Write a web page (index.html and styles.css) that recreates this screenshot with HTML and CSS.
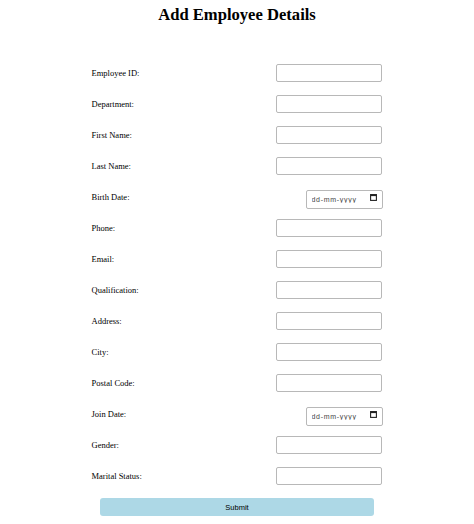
FILE: index.html
```html
<!DOCTYPE html>
<html lang="en-GB">
<head>
    <meta charset="UTF-8">
    <meta name="viewport" content="width=device-width, initial-scale=1.0">
    <title>Add Employee Details</title>
    <link rel="stylesheet" href="styles.css">
</head>
<body>
    <h1 class="page-title">Add Employee Details</h1>
    <form class="employee-form">
        <div class="form-row">
            <label for="employeeId">Employee ID:</label>
            <input type="text" id="employeeId">
        </div>
        <div class="form-row">
            <label for="department">Department:</label>
            <input type="text" id="department">
        </div>
        <div class="form-row">
            <label for="firstName">First Name:</label>
            <input type="text" id="firstName">
        </div>
        <div class="form-row">
            <label for="lastName">Last Name:</label>
            <input type="text" id="lastName">
        </div>
        <div class="form-row">
            <label for="birthDate">Birth Date:</label>
            <div class="date-field">
                <input type="text" id="birthDate" placeholder="dd-mm-yyyy">
                <svg class="calendar-icon" width="7" height="7" viewBox="0 0 7 7"><rect x="0.6" y="0.6" width="5.8" height="5.8" fill="none" stroke="#222" stroke-width="1.1"/><rect x="0.5" y="0.5" width="6" height="1.6" fill="#222"/></svg>
            </div>
        </div>
        <div class="form-row">
            <label for="phone">Phone:</label>
            <input type="text" id="phone">
        </div>
        <div class="form-row">
            <label for="email">Email:</label>
            <input type="text" id="email">
        </div>
        <div class="form-row">
            <label for="qualification">Qualification:</label>
            <input type="text" id="qualification">
        </div>
        <div class="form-row">
            <label for="address">Address:</label>
            <input type="text" id="address">
        </div>
        <div class="form-row">
            <label for="city">City:</label>
            <input type="text" id="city">
        </div>
        <div class="form-row">
            <label for="postalCode">Postal Code:</label>
            <input type="text" id="postalCode">
        </div>
        <div class="form-row">
            <label for="joinDate">Join Date:</label>
            <div class="date-field">
                <input type="text" id="joinDate" placeholder="dd-mm-yyyy">
                <svg class="calendar-icon" width="7" height="7" viewBox="0 0 7 7"><rect x="0.6" y="0.6" width="5.8" height="5.8" fill="none" stroke="#222" stroke-width="1.1"/><rect x="0.5" y="0.5" width="6" height="1.6" fill="#222"/></svg>
            </div>
        </div>
        <div class="form-row">
            <label for="gender">Gender:</label>
            <input type="text" id="gender">
        </div>
        <div class="form-row">
            <label for="maritalStatus">Marital Status:</label>
            <input type="text" id="maritalStatus">
        </div>
        <button type="button" class="submit-btn">Submit</button>
    </form>
</body>
</html>
```

FILE: styles.css
```css
body {
    margin: 0;
    font-family: 'Liberation Serif', serif;
    background-color: white;
    color: black;
}
.page-title {
    margin: 5px 0 0 0;
    text-align: center;
    font-size: 16.6px;
    line-height: 20px;
}
.employee-form {
    width: 291px;
    margin: 39px auto 0 auto;
    display: flex;
    flex-direction: column;
}
.form-row {
    display: flex;
    justify-content: space-between;
    align-items: center;
    height: 18px;
    margin-bottom: 13px;
}
.form-row label {
    font-size: 8.5px;
    margin-top: -1px;
}
.form-row input {
    box-sizing: border-box;
    width: 106px;
    height: 18px;
    margin: 0 1px 0 0;
    padding: 0 3px;
    border: 1px solid #b8b8b8;
    border-radius: 2px;
    font-size: 9px;
}
.date-field {
    position: relative;
    width: 77px;
    height: 19px;
}
.date-field input {
    width: 77px;
    height: 19px;
    margin: 0;
    padding: 0 14px 0 5px;
    font-family: 'Liberation Sans', sans-serif;
    font-size: 7px;
    letter-spacing: 0.7px;
}
.date-field input::placeholder {
    color: #444;
}
.calendar-icon {
    position: absolute;
    top: 6px;
    right: 6px;
}
.submit-btn {
    align-self: center;
    width: 274px;
    height: 18px;
    background-color: #add8e6;
    border: none;
    border-radius: 3px;
    font-family: 'Liberation Sans', sans-serif;
    font-size: 7.5px;
    color: black;
    cursor: pointer;
}
```
